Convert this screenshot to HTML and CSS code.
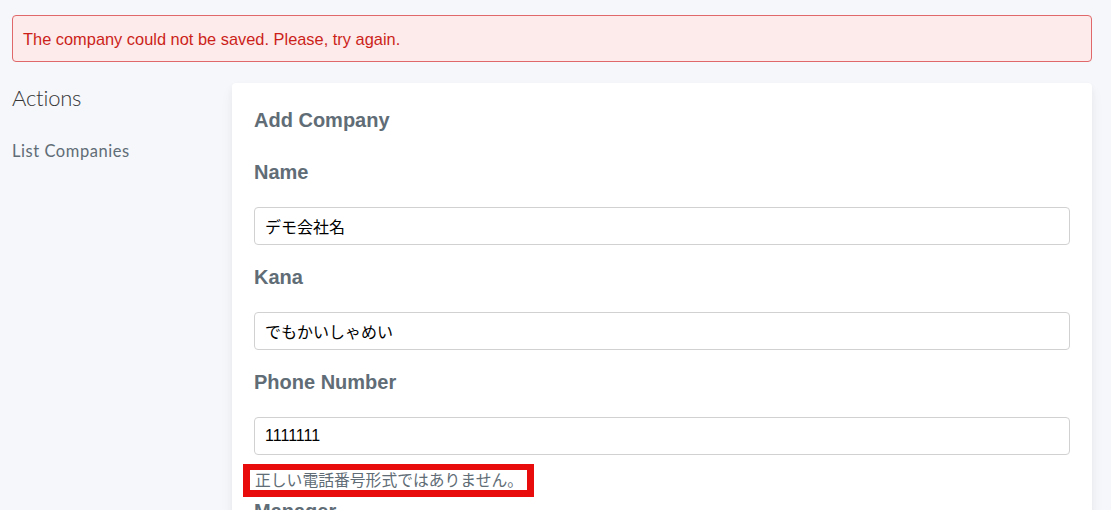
FILE: index.html
```html
<!DOCTYPE html>
<html lang="ja">
<head>
<meta charset="utf-8">
<title>Add Company</title>
<link rel="stylesheet" href="styles.css">
</head>
<body>
<div class="page">
  <div class="message error">The company could not be saved. Please, try again.</div>
  <div class="row">
    <aside class="side-nav">
      <h4 class="heading">Actions</h4>
      <a class="side-nav-item" href="#">List Companies</a>
    </aside>
    <main class="content">
      <form>
        <div class="legend">Add Company</div>
        <div class="field">
          <label class="label">Name</label>
          <input class="input" type="text" value="デモ会社名">
        </div>
        <div class="field">
          <label class="label">Kana</label>
          <input class="input" type="text" value="でもかいしゃめい">
        </div>
        <div class="field field-error">
          <label class="label">Phone Number</label>
          <input class="input" type="text" value="1111111">
          <div class="error-box"><span class="error-message">正しい電話番号形式ではありません。</span></div>
        </div>
        <div class="field">
          <label class="label">Manager</label>
        </div>
      </form>
    </main>
  </div>
</div>
</body>
</html>
```
FILE: styles.css
```css
html, body {
  margin: 0;
  padding: 0;
  background: #f5f7fa;
  height: 100%;
  overflow: hidden;
}
body {
  font-family: "Liberation Sans", Arial, "Noto Sans CJK JP", sans-serif;
  color: #606c76;
}
.page {
  padding: 15px 19px 0 12px;
}
.message.error {
  background: #fcebea;
  color: #cc1f1a;
  border: 1px solid #e0686a;
  border-radius: 4px;
  padding: 11px 10px 10px;
  font-size: 16.4px;
  line-height: 24px;
}
.row {
  display: flex;
  margin-top: 21px;
}
.side-nav {
  width: 220px;
  flex: 0 0 220px;
  display: flex;
  flex-direction: column;
}
.heading {
  margin: 0;
  font-family: Lato, "Open Sans", sans-serif;
  font-weight: 300;
  font-size: 22px;
  line-height: 30px;
  color: #363637;
  letter-spacing: -0.2px;
}
.side-nav-item {
  margin-top: 26px;
  font-family: Lato, "Open Sans", sans-serif;
  font-size: 16.5px;
  line-height: 24px;
  color: #606c76;
  text-decoration: none;
  letter-spacing: 0.55px;
}
.content {
  flex: 1;
  background: #fff;
  border-radius: 4px;
  padding: 25px 22px 0;
  box-shadow: 0 7px 14px 0 rgba(60, 66, 87, 0.05), 0 3px 6px 0 rgba(0, 0, 0, 0.04);
  min-height: 600px;
}
.legend {
  font-size: 20px;
  font-weight: 700;
  line-height: 24px;
  margin-bottom: 28px;
}
.field {
  display: flex;
  flex-direction: column;
  margin-bottom: 20px;
}
.field-error {
  margin-bottom: 2px;
}
.label {
  font-size: 20px;
  font-weight: 700;
  line-height: 24px;
  margin-bottom: 23px;
}
.input {
  box-sizing: border-box;
  height: 38px;
  width: 100%;
  border: 1px solid #d1d1d1;
  border-radius: 4px;
  padding: 0 10px;
  font-family: "Liberation Sans", Arial, "Noto Sans CJK JP", sans-serif;
  font-size: 16px;
  color: #000;
  background: #fff;
  margin: 0;
}
.error-box {
  align-self: flex-start;
  margin: 9px 0 0 -11px;
  border: 7px solid #e80c0c;
  border-top-width: 6px;
  background: #fff;
  padding: 0 4px 0 5px;
  height: 20px;
  display: flex;
  align-items: center;
}
.error-message {
  font-family: "Noto Sans CJK JP", sans-serif;
  font-size: 15.8px;
  line-height: 20px;
  color: #606c76;
  white-space: nowrap;
}
```
